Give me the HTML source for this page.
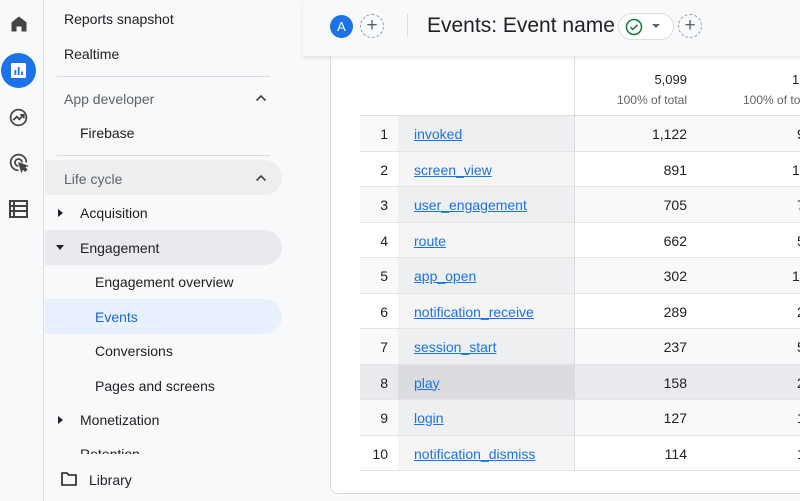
<!DOCTYPE html>
<html><head><style>
*{margin:0;padding:0;box-sizing:border-box}
body{width:800px;height:501px;overflow:hidden;background:#f8f9fa;font-family:"Liberation Sans",Arial,sans-serif;color:#202124;position:relative}
.rail{position:absolute;left:0;top:0;width:44px;height:501px;background:#f8f9fa;border-right:1px solid #dadce0}
.side{position:absolute;left:45px;top:0;width:258px;height:501px;background:#f8f9fa}
.it{position:absolute;font-size:14px;white-space:nowrap}
.hr{position:absolute;left:57px;width:213px;height:1px;background:#dadce0}
.pill{position:absolute;left:45px;width:237px;height:35px;border-radius:0 18px 18px 0}
.card{position:absolute;left:330px;top:50px;width:480px;height:444px;background:#fff;border:1px solid #dadce0;border-radius:8px}
.top{position:absolute;left:303px;top:0;width:497px;height:56px;background:#f8f9fa;box-shadow:0 2px 3px rgba(60,64,67,.12)}
.row{position:absolute;left:360px;width:440px;height:35.5px;border-bottom:1px solid #e3e4e6;font-size:14px}
.row .n{position:absolute;right:412px;top:10px}
.row .nm{position:absolute;left:38px;top:0;width:176px;height:100%;background:rgba(60,64,67,.05)}
.row .nm a{position:absolute;left:16px;top:10px;color:#1a73e8;text-decoration:underline}
.row .v{position:absolute;left:214px;top:10px;width:113px;text-align:right}
.row .v2{position:absolute;left:437px;top:10px}
.chev{position:absolute;left:255px}
</style></head><body>
<div class="rail">
<svg style="position:absolute;left:9px;top:14px" width="20" height="20" viewBox="0 0 24 24"><path fill="#444" d="M12 3 3 10v11h6v-6h6v6h6V10z"/></svg>
<div style="position:absolute;left:1px;top:53px;width:35px;height:35px;border-radius:50%;background:#1a73e8"></div>
<svg style="position:absolute;left:10px;top:62px" width="17" height="17" viewBox="0 0 17 17"><rect x="1" y="1" width="15" height="15" rx="1.5" fill="#fff"/><rect x="4.5" y="8" width="1.8" height="5" fill="#1a73e8"/><rect x="7.8" y="5" width="1.8" height="8" fill="#1a73e8"/><rect x="11" y="9.5" width="1.8" height="3.5" fill="#1a73e8"/></svg>
<svg style="position:absolute;left:8px;top:107px" width="21" height="21" viewBox="0 0 24 24" fill="none" stroke="#444" stroke-width="2"><circle cx="12" cy="12" r="9"/><path d="M6 15l4-4 3 3 5-5M14 9h4v4"/></svg>
<svg style="position:absolute;left:8px;top:152px" width="21" height="21" viewBox="0 0 24 24" fill="none" stroke="#444" stroke-width="2"><path d="M12 21a9 9 0 1 1 9-9M12 16a4 4 0 1 1 4-4"/><path fill="#444" d="M13 13l8 3-3 1 3 3-1.5 1.5-3-3-1 3z"/></svg>
<svg style="position:absolute;left:9px;top:200px" width="19" height="18" viewBox="0 0 19 18" fill="none" stroke="#444" stroke-width="2"><rect x="1" y="1" width="17" height="16"/><path d="M1 6h17M1 11h17M5 1v16"/></svg>
</div>
<div class="side">
<div class="pill" style="left:0;top:160px;background:#eceef0;width:237px"></div>
<div class="pill" style="left:0;top:230px;background:#e8eaed;width:237px"></div>
<div class="pill" style="left:0;top:299px;background:#e8f0fe;width:237px"></div>
</div>
<div class="it" style="left:64px;top:11px">Reports snapshot</div>
<div class="it" style="left:64px;top:46px">Realtime</div>
<div class="hr" style="top:76px"></div>
<div class="it" style="left:64px;top:91px;color:#5f6368">App developer</div>
<svg class="chev" style="top:94px" width="12" height="8" viewBox="0 0 12 8" fill="none" stroke="#444" stroke-width="1.6"><path d="M1.5 6.5 6 2l4.5 4.5"/></svg>
<div class="it" style="left:80px;top:125px">Firebase</div>
<div class="hr" style="top:155px"></div>
<div class="it" style="left:64px;top:171px;color:#5f6368">Life cycle</div>
<svg class="chev" style="top:174px" width="12" height="8" viewBox="0 0 12 8" fill="none" stroke="#444" stroke-width="1.6"><path d="M1.5 6.5 6 2l4.5 4.5"/></svg>
<svg style="position:absolute;left:58px;top:209px" width="5" height="8"><path d="M0 0l5 4-5 4z" fill="#202124"/></svg>
<div class="it" style="left:80px;top:205px">Acquisition</div>
<svg style="position:absolute;left:56px;top:245px" width="8" height="5"><path d="M0 0h8L4 5z" fill="#202124"/></svg>
<div class="it" style="left:80px;top:240px">Engagement</div>
<div class="it" style="left:95px;top:274px">Engagement overview</div>
<div class="it" style="left:95px;top:309px;color:#1967d2">Events</div>
<div class="it" style="left:95px;top:343px">Conversions</div>
<div class="it" style="left:95px;top:378px">Pages and screens</div>
<svg style="position:absolute;left:58px;top:416px" width="5" height="8"><path d="M0 0l5 4-5 4z" fill="#202124"/></svg>
<div class="it" style="left:80px;top:412px">Monetization</div>
<div style="position:absolute;left:80px;top:446px;height:8px;overflow:hidden;width:100px"><div class="it" style="left:0;top:0">Retention</div></div>
<svg style="position:absolute;left:61px;top:472px" width="16" height="14" viewBox="0 0 16 14" fill="none" stroke="#202124" stroke-width="1.6"><path d="M1 1h5l1.5 2H15v10H1z"/></svg>
<div class="it" style="left:89px;top:472px">Library</div>

<div class="card"></div>
<div class="top">
<div style="position:absolute;left:27px;top:15px;width:23px;height:23px;border-radius:50%;background:#1a73e8;color:#fff;font-size:13px;text-align:center;line-height:23px">A</div>
<div style="position:absolute;left:57px;top:14px;width:24px;height:24px;border-radius:50%;border:1px dashed #9aa0a6;color:#5f6368;text-align:center;line-height:21px;font-size:19px">+</div>
<div style="position:absolute;left:104px;top:14px;width:1px;height:22px;background:#dadce0"></div>
<div style="position:absolute;left:124px;top:14px;font-size:21px">Events: Event name</div>
<div style="position:absolute;left:315px;top:13px;width:56px;height:27px;border-radius:14px;border:1px solid #dadce0;background:#fff"></div>
<svg style="position:absolute;left:322px;top:18px" width="18" height="18" viewBox="0 0 18 18" fill="none" stroke="#188038" stroke-width="1.6"><circle cx="9" cy="9" r="7.5"/><path d="M5.5 9.2l2.3 2.3 4.7-4.7"/></svg>
<div style="position:absolute;left:349px;top:24px;width:0;height:0;border-left:4px solid transparent;border-right:4px solid transparent;border-top:4px solid #5f6368"></div>
<div style="position:absolute;left:375px;top:14px;width:24px;height:24px;border-radius:50%;border:1px dashed #9aa0a6;color:#5f6368;text-align:center;line-height:21px;font-size:19px">+</div>
</div>
<div style="position:absolute;left:574px;top:57px;width:1px;height:413px;background:#dadce0"></div>
<div style="position:absolute;left:600px;top:72px;width:87px;text-align:right;font-size:13px">5,099</div>
<div style="position:absolute;left:600px;top:93px;width:87px;text-align:right;font-size:12px;color:#5f6368">100% of total</div>
<div style="position:absolute;left:792px;top:72px;font-size:13px">12</div>
<div style="position:absolute;left:743px;top:93px;font-size:12px;color:#5f6368;white-space:nowrap">100% of total</div>
<div style="position:absolute;left:360px;top:115px;width:440px;height:1px;background:#dadce0"></div>

<div class="row" style="top:116px;background:#f8f9fa"><span class="n">1</span><div class="nm"><a>invoked</a></div><span class="v">1,122</span><span class="v2">9</span></div>
<div class="row" style="top:151.5px;background:#fff"><span class="n">2</span><div class="nm"><a>screen_view</a></div><span class="v">891</span><span class="v2" style="left:432px">10</span></div>
<div class="row" style="top:187px;background:#f8f9fa"><span class="n">3</span><div class="nm"><a>user_engagement</a></div><span class="v">705</span><span class="v2">7</span></div>
<div class="row" style="top:222.5px;background:#fff"><span class="n">4</span><div class="nm"><a>route</a></div><span class="v">662</span><span class="v2">5</span></div>
<div class="row" style="top:258px;background:#f8f9fa"><span class="n">5</span><div class="nm"><a>app_open</a></div><span class="v">302</span><span class="v2" style="left:432px">10</span></div>
<div class="row" style="top:293.5px;background:#fff"><span class="n">6</span><div class="nm"><a>notification_receive</a></div><span class="v">289</span><span class="v2">2</span></div>
<div class="row" style="top:329px;background:#f8f9fa"><span class="n">7</span><div class="nm"><a>session_start</a></div><span class="v">237</span><span class="v2">5</span></div>
<div class="row" style="top:364.5px;background:#e8eaed"><span class="n">8</span><div class="nm" style="background:rgba(60,64,67,.08)"><a>play</a></div><span class="v">158</span><span class="v2">2</span></div>
<div class="row" style="top:400px;background:#f8f9fa"><span class="n">9</span><div class="nm"><a>login</a></div><span class="v">127</span><span class="v2">1</span></div>
<div class="row" style="top:435.5px;background:#fff"><span class="n">10</span><div class="nm"><a>notification_dismiss</a></div><span class="v">114</span><span class="v2">1</span></div>
<div style="position:absolute;left:574px;top:116px;width:1px;height:354px;background:#dadce0"></div>
</body></html>
